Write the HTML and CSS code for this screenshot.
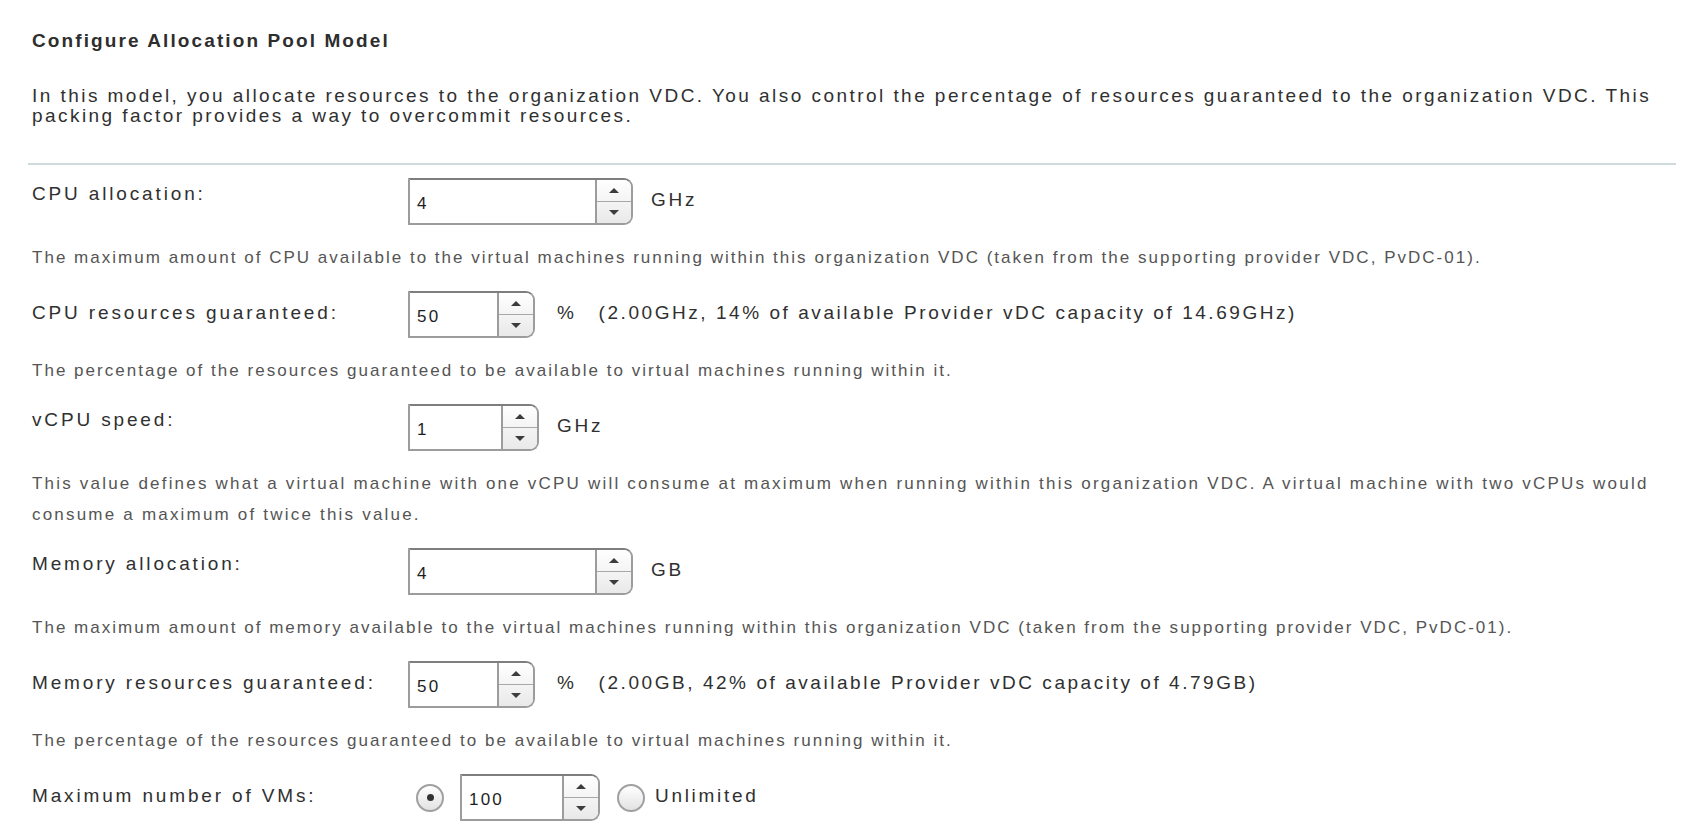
FILE: index.html
```html
<!DOCTYPE html>
<html lang="en">
<head>
<meta charset="utf-8">
<title>Configure Allocation Pool Model</title>
<link rel="stylesheet" href="styles.css">
</head>
<body>
<div class="page">
  <h2 class="title">Configure Allocation Pool Model</h2>
  <p class="intro">In this model, you allocate resources to the organization VDC. You also control the percentage of resources guaranteed to the organization VDC. This<br>packing factor provides a way to overcommit resources.</p>
  <hr class="divider">
  <div class="fields">
    <div class="field">
      <div class="row">
        <div class="label">CPU allocation:</div>
        <div class="spinner spinner--long"><span class="value">4</span><span class="btns"><span class="btn btn--up"></span><span class="btn btn--down"></span></span></div>
        <span class="unit">GHz</span>
      </div>
      <p class="desc">The maximum amount of CPU available to the virtual machines running within this organization VDC (taken from the supporting provider VDC, PvDC-01).</p>
    </div>
    <div class="field">
      <div class="row row--mid">
        <div class="label">CPU resources guaranteed:</div>
        <div class="spinner spinner--short"><span class="value">50</span><span class="btns"><span class="btn btn--up"></span><span class="btn btn--down"></span></span></div>
        <span class="unit unit--pct">%</span>
        <span class="note">(2.00GHz, 14% of available Provider vDC capacity of 14.69GHz)</span>
      </div>
      <p class="desc">The percentage of the resources guaranteed to be available to virtual machines running within it.</p>
    </div>
    <div class="field">
      <div class="row">
        <div class="label">vCPU speed:</div>
        <div class="spinner spinner--mid"><span class="value">1</span><span class="btns"><span class="btn btn--up"></span><span class="btn btn--down"></span></span></div>
        <span class="unit">GHz</span>
      </div>
      <p class="desc desc--wide">This value defines what a virtual machine with one vCPU will consume at maximum when running within this organization VDC. A virtual machine with two vCPUs would<br>consume a maximum of twice this value.</p>
    </div>
    <div class="field">
      <div class="row">
        <div class="label">Memory allocation:</div>
        <div class="spinner spinner--long"><span class="value">4</span><span class="btns"><span class="btn btn--up"></span><span class="btn btn--down"></span></span></div>
        <span class="unit">GB</span>
      </div>
      <p class="desc">The maximum amount of memory available to the virtual machines running within this organization VDC (taken from the supporting provider VDC, PvDC-01).</p>
    </div>
    <div class="field">
      <div class="row row--mid">
        <div class="label">Memory resources guaranteed:</div>
        <div class="spinner spinner--short"><span class="value">50</span><span class="btns"><span class="btn btn--up"></span><span class="btn btn--down"></span></span></div>
        <span class="unit unit--pct">%</span>
        <span class="note">(2.00GB, 42% of available Provider vDC capacity of 4.79GB)</span>
      </div>
      <p class="desc">The percentage of the resources guaranteed to be available to virtual machines running within it.</p>
    </div>
    <div class="field">
      <div class="row row--mid">
        <div class="label">Maximum number of VMs:</div>
        <span class="radio radio--on"></span>
        <div class="spinner spinner--vms"><span class="value">100</span><span class="btns"><span class="btn btn--up"></span><span class="btn btn--down"></span></span></div>
        <span class="radio radio--off"></span>
        <span class="radio-text">Unlimited</span>
      </div>
    </div>
  </div>
</div>
</body>
</html>
```
FILE: styles.css
```css
html, body {
  margin: 0;
  background: #ffffff;
}

body {
  font-family: "Liberation Sans", Arial, sans-serif;
  color: #333333;
}

.page {
  padding: 30px 16px 0 28px;
}

.title {
  margin: 0;
  padding-left: 4px;
  font-size: 19px;
  line-height: 22px;
  font-weight: bold;
  letter-spacing: 2.1px;
  color: #2e2e2e;
}

.intro {
  margin: 34px 0 0;
  padding-left: 4px;
  font-size: 19px;
  line-height: 20px;
  letter-spacing: 2.45px;
  color: #303030;
  white-space: nowrap;
}

.divider {
  margin: 37px 0 0;
  height: 2px;
  border: 0;
  background: #cfdada;
}

.fields {
  margin-top: 13px;
}

.row {
  display: flex;
  align-items: flex-start;
  height: 47px;
}

.label {
  flex: none;
  width: 376px;
  padding-left: 4px;
  padding-top: 5px;
  font-size: 19px;
  line-height: 22px;
  letter-spacing: 2.85px;
  color: #303030;
}

.row--mid .label {
  padding-top: 11px;
}

.spinner {
  flex: none;
  display: flex;
  height: 47px;
  box-sizing: border-box;
  border: 2px solid #9c9c9c;
  border-top-color: #7e7e7e;
  border-radius: 0 9px 9px 0;
  background: #ffffff;
}

.spinner--long { width: 225px; }
.spinner--short { width: 127px; }
.spinner--mid { width: 131px; }
.spinner--vms { width: 140px; }

.value {
  flex: 1;
  display: flex;
  align-items: center;
  padding: 5px 0 0 7px;
  font-size: 17px;
  letter-spacing: 2.2px;
  color: #1e1e1e;
}

.btns {
  flex: none;
  width: 34px;
  display: flex;
  flex-direction: column;
  border-left: 2px solid #9c9c9c;
  border-radius: 0 7px 7px 0;
  background: linear-gradient(#ffffff, #e9e9e9);
}

.btn {
  flex: 1;
  display: flex;
  align-items: center;
  justify-content: center;
}

.btn + .btn {
  border-top: 1px solid #a8a8a8;
}

.btn--up::before {
  content: "";
  border-left: 5px solid transparent;
  border-right: 5px solid transparent;
  border-bottom: 5px solid #3c3c3c;
}

.btn--down::before {
  content: "";
  border-left: 5px solid transparent;
  border-right: 5px solid transparent;
  border-top: 5px solid #3c3c3c;
}

.unit,
.note,
.radio-text {
  align-self: center;
  margin-top: -4px;
  font-size: 19px;
  line-height: 22px;
  letter-spacing: 2.7px;
  color: #303030;
  white-space: nowrap;
}

.unit {
  margin-left: 18px;
}

.unit--pct {
  margin-left: 22px;
}

.note {
  margin-left: 22px;
  letter-spacing: 2.55px;
}

.desc {
  margin: 17px 0 18px;
  padding-left: 4px;
  font-size: 17px;
  line-height: 31px;
  letter-spacing: 2.02px;
  color: #555555;
  white-space: nowrap;
}

.desc--wide {
  letter-spacing: 2.2px;
}

.radio {
  flex: none;
  align-self: center;
  width: 28px;
  height: 28px;
  box-sizing: border-box;
  border-radius: 50%;
  border: 2px solid #a0a0a0;
  background: linear-gradient(#ffffff, #e2e2e2);
  display: flex;
  align-items: center;
  justify-content: center;
}

.radio--on {
  margin-left: 8px;
  margin-right: 16px;
}

.radio--on::after {
  content: "";
  width: 7px;
  height: 7px;
  border-radius: 50%;
  background: #333333;
}

.radio--off {
  margin-left: 17px;
}

.radio-text {
  margin-left: 10px;
}
```
